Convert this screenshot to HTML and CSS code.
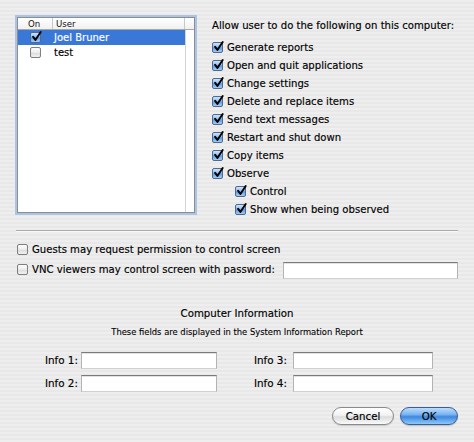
FILE: index.html
```html
<!DOCTYPE html>
<html>
<head>
<meta charset="utf-8">
<link rel="stylesheet" href="styles.css">
</head>
<body>
<div class="window">
  <div class="top">
    <div class="userlist">
      <div class="lhead">
        <span class="h-on">On</span>
        <span class="h-user">User</span>
        <span class="h-scroll"></span>
      </div>
      <div class="lbody">
        <div class="rows">
          <div class="row sel">
            <span class="c-on"><span class="cb on"><svg viewBox="0 0 12 12"><path d="M2.3 5.8 L4.8 9.2 L10.6 0.6"/></svg></span></span>
            <span class="uname">Joel Bruner</span>
          </div>
          <div class="row">
            <span class="c-on"><span class="cb"></span></span>
            <span class="uname">test</span>
          </div>
        </div>
        <div class="scrollcol"></div>
      </div>
    </div>
    <div class="perms">
      <div class="ptitle">Allow user to do the following on this computer:</div>
      <div class="plist">
        <div class="opt"><span class="cb on"><svg viewBox="0 0 12 12"><path d="M2.3 5.8 L4.8 9.2 L10.6 0.6"/></svg></span><span>Generate reports</span></div>
        <div class="opt"><span class="cb on"><svg viewBox="0 0 12 12"><path d="M2.3 5.8 L4.8 9.2 L10.6 0.6"/></svg></span><span>Open and quit applications</span></div>
        <div class="opt"><span class="cb on"><svg viewBox="0 0 12 12"><path d="M2.3 5.8 L4.8 9.2 L10.6 0.6"/></svg></span><span>Change settings</span></div>
        <div class="opt"><span class="cb on"><svg viewBox="0 0 12 12"><path d="M2.3 5.8 L4.8 9.2 L10.6 0.6"/></svg></span><span>Delete and replace items</span></div>
        <div class="opt"><span class="cb on"><svg viewBox="0 0 12 12"><path d="M2.3 5.8 L4.8 9.2 L10.6 0.6"/></svg></span><span>Send text messages</span></div>
        <div class="opt"><span class="cb on"><svg viewBox="0 0 12 12"><path d="M2.3 5.8 L4.8 9.2 L10.6 0.6"/></svg></span><span>Restart and shut down</span></div>
        <div class="opt"><span class="cb on"><svg viewBox="0 0 12 12"><path d="M2.3 5.8 L4.8 9.2 L10.6 0.6"/></svg></span><span>Copy items</span></div>
        <div class="opt"><span class="cb on"><svg viewBox="0 0 12 12"><path d="M2.3 5.8 L4.8 9.2 L10.6 0.6"/></svg></span><span>Observe</span></div>
        <div class="opt sub"><span class="cb on"><svg viewBox="0 0 12 12"><path d="M2.3 5.8 L4.8 9.2 L10.6 0.6"/></svg></span><span>Control</span></div>
        <div class="opt sub"><span class="cb on"><svg viewBox="0 0 12 12"><path d="M2.3 5.8 L4.8 9.2 L10.6 0.6"/></svg></span><span>Show when being observed</span></div>
      </div>
    </div>
  </div>

  <div class="sep"></div>

  <div class="extra">
    <div class="xrow"><span class="cb"></span><span>Guests may request permission to control screen</span></div>
    <div class="xrow vnc"><span class="cb"></span><span class="vlabel">VNC viewers may control screen with password:</span><span class="field vfield"></span></div>
  </div>

  <div class="info">
    <div class="ititle">Computer Information</div>
    <div class="isub">These fields are displayed in the System Information Report</div>
    <div class="igrid">
      <span class="ilab l1">Info 1:</span><span class="field f1"></span>
      <span class="ilab l3">Info 3:</span><span class="field f3"></span>
      <span class="ilab l1">Info 2:</span><span class="field f1"></span>
      <span class="ilab l3">Info 4:</span><span class="field f3"></span>
    </div>
  </div>

  <div class="buttons">
    <span class="btn cancel">Cancel</span>
    <span class="btn ok">OK</span>
  </div>
</div>
</body>
</html>
```

FILE: styles.css
```css
* { box-sizing: border-box; }
html, body { margin: 0; padding: 0; }
body {
  width: 474px;
  height: 442px;
  overflow: hidden;
  font-family: "DejaVu Sans", "Verdana", sans-serif;
  font-size: 10.1px;
  color: #000;
  -webkit-text-stroke: 0.15px #000;
  background: repeating-linear-gradient(to bottom, #eeeeee 0px, #eeeeee 2px, #e8e8e8 2px, #e8e8e8 4px);
}
.window { width: 474px; height: 442px; }

/* top area */
.top {
  display: flex;
  padding: 17px 0 0 17px;
  height: 215px;
}
.userlist {
  width: 178px;
  height: 196px;
  border: 1px solid #8d8d8d;
  box-shadow: 0 0 0 2px #a9c4e4;
  background: #fff;
  display: flex;
  flex-direction: column;
}
.lhead {
  display: flex;
  height: 12px;
  border-bottom: 1px solid #a8a8a8;
  background: linear-gradient(#ffffff, #f0f0f0);
  font-size: 8.6px;
  line-height: 12px;
  color: #111;
  -webkit-text-stroke: 0;
}
.h-on { width: 35px; padding-left: 10px; border-right: 1px solid #c8c8c8; }
.h-user { flex: 1; padding-left: 3px; border-right: 1px solid #c8c8c8; }
.h-scroll { width: 9px; }
.lbody { flex: 1; display: flex; }
.rows { flex: 1; }
.scrollcol { width: 9px; border-left: 1px solid #d4d4d4; }
.row {
  display: flex;
  align-items: center;
  height: 15px;
}
.row.sel { background: #3a78d8; color: #fff; -webkit-text-stroke: 0.15px #fff; }
.c-on { width: 35px; display: flex; justify-content: center; }
.uname { padding-left: 1px; font-size: 10px; }

/* checkboxes */
.cb {
  position: relative;
  display: inline-block;
  flex: none;
  width: 11px;
  height: 11px;
  border: 1px solid #7f7f7f;
  border-radius: 2px;
  background: linear-gradient(#ffffff, #ececec 50%, #d8d8d8 51%, #f4f4f4);
  box-shadow: inset 0 0 1px rgba(0,0,0,0.15);
}
.cb.on {
  border-color: #4d6b92;
  background: linear-gradient(#d4e6fb, #8fbcef 45%, #5b9ae5 52%, #a5d0f7);
}
.cb svg {
  position: absolute;
  left: 0px;
  top: -2px;
  width: 11px;
  height: 12px;
  overflow: visible;
}
.cb svg path {
  fill: none;
  stroke: #000;
  stroke-width: 2.1;
  stroke-linecap: round;
  stroke-linejoin: round;
}

/* permissions */
.perms { margin-left: 17px; }
.ptitle { margin-top: 2px; height: 14px; line-height: 14px; }
.plist { margin-top: 5px; }
.opt {
  display: flex;
  align-items: center;
  height: 18px;
  gap: 4px;
}
.opt.sub { padding-left: 23px; }

/* separator */
.sep {
  margin: 15px 16px 0 16px;
  height: 2px;
  border-top: 1px solid #a9a9a9;
  border-bottom: 1px solid #f8f8f8;
}

/* extra options */
.extra { padding: 8px 16px 0 17px; }
.xrow {
  display: flex;
  align-items: center;
  height: 18px;
  gap: 4px;
}
.xrow.vnc { height: 20px; margin-top: 1px; }
.vlabel { margin-right: 4px; }
.field {
  display: block;
  height: 17px;
  background: #fff;
  border: 1px solid #9a9a9a;
  border-top-color: #7a7a7a;
  border-left-color: #b3b3b3;
  border-right-color: #b3b3b3;
  border-bottom-color: #d0d0d0;
  box-shadow: inset 0 1px 0 #e2e2e2;
}
.vfield { flex: 1; margin-top: 2px; }

/* info */
.info { margin-top: 28px; text-align: center; }
.ititle { height: 14px; line-height: 14px; font-size: 10.2px; }
.isub { margin-top: 5px; height: 12px; line-height: 12px; font-size: 8.4px; -webkit-text-stroke: 0.1px #000; }
.igrid {
  display: grid;
  grid-template-columns: 66px 136px 76px 140px;
  grid-auto-rows: 17px;
  row-gap: 6px;
  margin: 14px 0 0 15px;
  text-align: right;
}
.ilab { line-height: 17px; font-size: 10.4px; }
.l1 { padding-right: 3px; }
.l3 { padding-right: 6px; }

/* buttons */
.buttons {
  display: flex;
  justify-content: flex-end;
  gap: 6px;
  margin-top: 15px;
  padding-right: 16px;
}
.btn {
  display: flex;
  align-items: center;
  justify-content: center;
  height: 18px;
  border-radius: 9px;
  font-size: 10.2px;
}
.cancel {
  width: 62px;
  border: 1px solid #8a8a8a;
  background: linear-gradient(#ffffff, #f2f2f2 45%, #dcdcdc 55%, #fafafa);
  box-shadow: 0 1px 1px rgba(0,0,0,0.15);
}
.ok {
  width: 58px;
  border: 1px solid #3a5d95;
  background: linear-gradient(#bcdcfb, #7ab5f1 40%, #3f87e0 55%, #8ccaf8);
  box-shadow: 0 1px 1px rgba(0,0,0,0.2);
}
```
